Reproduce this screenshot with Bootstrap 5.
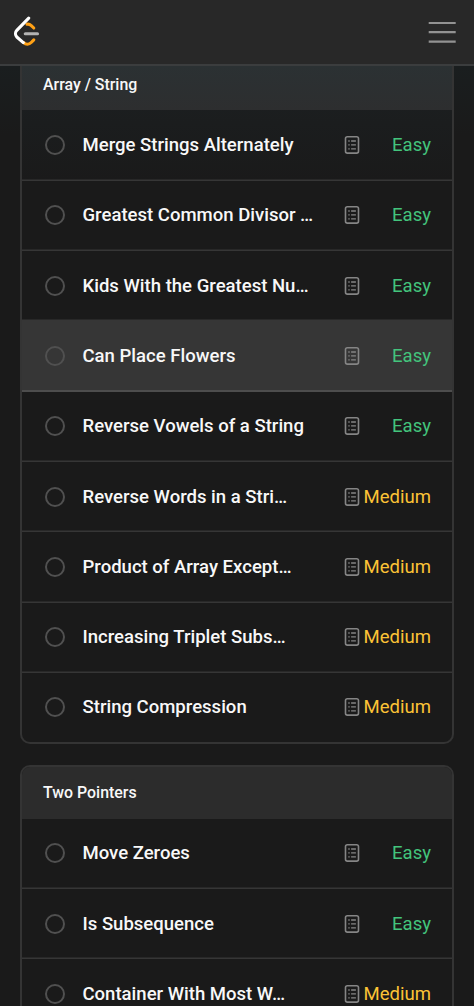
<!DOCTYPE html>
<html lang="en">
<head>
<meta charset="utf-8">
<meta name="viewport" content="width=device-width, initial-scale=1">
<title>Study plan</title>
<link href="https://cdn.jsdelivr.net/npm/bootstrap@5.3.0/dist/css/bootstrap.min.css" rel="stylesheet">
<style>
html, body { height: 100%; overflow: hidden; }
body { background: #1a1a1a; color: #f8f8f8; font-family: Roboto, "Liberation Sans", sans-serif; }
.topbar { height: 66px; background: #282828; border-bottom: 2px solid #3b3d3e; padding: 0 18px 0 14px; }
.plan { height: 940px; overflow: hidden; padding: 0 20px; background: linear-gradient(#1a1e1f 0, #1a1a1a 70px); }
.topic { border: 2px solid #343434; border-radius: 10px; overflow: hidden; background: #1a1a1a; margin-bottom: 21px; }
.topic-first { border-top: 0; border-radius: 0 0 10px 10px; background: linear-gradient(#1c2022 0, #1a1a1a 115px); }
.topic-head { height: 52px; padding-left: 21px; font-size: 15.9px; font-weight: 500; line-height: 24px; background: #2c2c2c; }
.topic-first .topic-head { height: 44.4px; padding-bottom: 7px; background: linear-gradient(#2b3133, #2d2e2f); }
.problem { height: 70.33px; padding: 0 21px 1px 23px; box-shadow: inset 0 -1.6px #363636; }
.topic-first .problem:last-child { height: 68.6px; padding-bottom: 0; box-shadow: none; }
.problem.active { background: #363636; box-shadow: inset 0 -2px #4d4d4d; }
.ring { width: 20px; height: 20px; border: 2px solid #505050; border-radius: 50%; margin-right: 17.5px; }
.name { font-size: 18.55px; font-weight: 500; white-space: nowrap; width: 261.5px; line-height: 28px; }
.note { width: 16px; height: 20px; color: #858585; }
.level { font-size: 18.55px; line-height: 28px; }
.easy { color: #43c47c; }
.medium { color: #fcc336; }
</style>
</head>
<body>
<svg class="d-none">
  <symbol id="note" viewBox="0 0 16 20">
    <rect x="1.5" y="1.7" width="13" height="16.4" rx="1.9" fill="none" stroke="currentColor" stroke-width="1.6"/>
    <path d="M4.3 6h1.4M7.1 6h4.8M4.3 9.9h1.4M7.1 9.9h4.8M4.3 13.8h1.4M7.1 13.8h4.8" stroke="currentColor" stroke-width="1.3"/>
  </symbol>
</svg>
<nav class="topbar d-flex align-items-center justify-content-between">
  <svg width="26" height="32" viewBox="14 15.5 26 32" fill="none" stroke-linecap="round" stroke-linejoin="round" stroke-width="3.1" aria-label="Home">
    <path d="M27 23.7c1.7-.3 3 .2 4.3 1.4l2.5 2.4M33.8 39.4l-2.6 2.6c-2.2 2.2-5.4 2.2-7.4.2" stroke="#ffa116"/>
    <path d="M25.3 33.3h12.2" stroke="#b3b3b3"/>
    <path d="M28.7 17.6L16.8 29.8c-1.7 1.8-1.7 4.8 0 6.7l6.5 5.6" stroke="#fff"/>
  </svg>
  <svg width="28" height="24" viewBox="0 0 28 24" stroke="#929292" stroke-width="2.2" aria-label="Menu"><path d="M.7 3h27M.7 12.2h27M.7 21.6h27"/></svg>
</nav>
<main class="plan">
  <section class="topic topic-first">
    <div class="topic-head d-flex align-items-center">Array / String</div>
    <div class="problem d-flex align-items-center"><span class="ring"></span><span class="name">Merge Strings Alternately</span><svg class="note"><use href="#note"/></svg><span class="level easy ms-auto">Easy</span></div>
    <div class="problem d-flex align-items-center"><span class="ring"></span><span class="name">Greatest Common Divisor …</span><svg class="note"><use href="#note"/></svg><span class="level easy ms-auto">Easy</span></div>
    <div class="problem d-flex align-items-center"><span class="ring"></span><span class="name">Kids With the Greatest Nu…</span><svg class="note"><use href="#note"/></svg><span class="level easy ms-auto">Easy</span></div>
    <div class="problem active d-flex align-items-center"><span class="ring"></span><span class="name">Can Place Flowers</span><svg class="note"><use href="#note"/></svg><span class="level easy ms-auto">Easy</span></div>
    <div class="problem d-flex align-items-center"><span class="ring"></span><span class="name">Reverse Vowels of a String</span><svg class="note"><use href="#note"/></svg><span class="level easy ms-auto">Easy</span></div>
    <div class="problem d-flex align-items-center"><span class="ring"></span><span class="name">Reverse Words in a Stri…</span><svg class="note"><use href="#note"/></svg><span class="level medium ms-auto">Medium</span></div>
    <div class="problem d-flex align-items-center"><span class="ring"></span><span class="name">Product of Array Except…</span><svg class="note"><use href="#note"/></svg><span class="level medium ms-auto">Medium</span></div>
    <div class="problem d-flex align-items-center"><span class="ring"></span><span class="name">Increasing Triplet Subs…</span><svg class="note"><use href="#note"/></svg><span class="level medium ms-auto">Medium</span></div>
    <div class="problem d-flex align-items-center"><span class="ring"></span><span class="name">String Compression</span><svg class="note"><use href="#note"/></svg><span class="level medium ms-auto">Medium</span></div>
  </section>
  <section class="topic">
    <div class="topic-head d-flex align-items-center">Two Pointers</div>
    <div class="problem d-flex align-items-center"><span class="ring"></span><span class="name">Move Zeroes</span><svg class="note"><use href="#note"/></svg><span class="level easy ms-auto">Easy</span></div>
    <div class="problem d-flex align-items-center"><span class="ring"></span><span class="name">Is Subsequence</span><svg class="note"><use href="#note"/></svg><span class="level easy ms-auto">Easy</span></div>
    <div class="problem d-flex align-items-center"><span class="ring"></span><span class="name">Container With Most W…</span><svg class="note"><use href="#note"/></svg><span class="level medium ms-auto">Medium</span></div>
  </section>
</main>
<script src="https://cdn.jsdelivr.net/npm/bootstrap@5.3.0/dist/js/bootstrap.bundle.min.js"></script>
</body>
</html>
